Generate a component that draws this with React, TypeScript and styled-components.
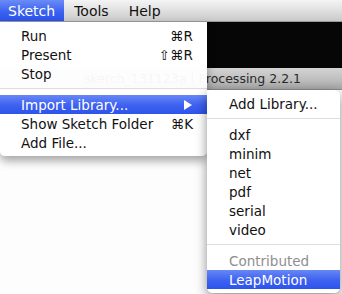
import React from "react";
import styled, { createGlobalStyle, css } from "styled-components";

const GlobalStyle = createGlobalStyle`
  html, body { margin: 0; padding: 0; background: #fff; }
  body { width: 342px; height: 294px; overflow: hidden; font-family: "DejaVu Sans", "Liberation Sans", sans-serif; }
`;

const Screen = styled.div`
  position: relative;
  width: 342px;
  height: 294px;
  overflow: hidden;
  background: #fff;
  display: flex;
  flex-direction: column;
`;

const MenuBar = styled.div`
  height: 21px;
  display: flex;
  align-items: stretch;
  background: linear-gradient(#f4f4f4, #e2e2e2 45%, #c9c9c9);
  border-bottom: 1px solid #9a9a9a;
`;

const BarTitle = styled.div<{ $active?: boolean }>`
  display: flex;
  align-items: center;
  padding: 0 10px;
  font-size: 14px;
  color: #111;
  ${(p) =>
    p.$active &&
    css`
      padding: 0 9px 0 8px;
      color: #fff;
      background: linear-gradient(#6a8cf6, #3c62f0 55%, #2b52ea);
    `}
`;

const Desktop = styled.div`
  flex: 1;
  display: flex;
  flex-direction: column;
`;

const UpperRow = styled.div`
  height: 46px;
  display: grid;
  grid-template-columns: 207px 1fr;
`;

const LightPane = styled.div`
  background: #fbfbfb;
`;

const DarkPane = styled.div`
  background: #060606;
`;

const WindowTitle = styled.div`
  height: 21px;
  display: flex;
  align-items: center;
  padding-left: 84px;
  font-size: 12.5px;
  color: #2a2a2a;
  white-space: nowrap;
  background: linear-gradient(#d4d4d4, #bcbcbc 60%, #a6a6a6);
  border-bottom: 1px solid #8c8c8c;
`;

const LowerArea = styled.div`
  flex: 1;
  background: #fdfdfd;
`;

const Menu = styled.div`
  position: absolute;
  left: 0;
  top: 22px;
  width: 207px;
  padding: 4px 0 4px;
  background: rgba(255, 255, 255, 0.96);
  border-radius: 0 0 5px 5px;
  box-shadow: 0 5px 10px rgba(0, 0, 0, 0.35);
  box-sizing: border-box;
`;

const SubMenu = styled.div`
  position: absolute;
  left: 207px;
  top: 90px;
  width: 133px;
  padding: 4px 0 4px;
  background: rgba(255, 255, 255, 0.98);
  border-radius: 0 6px 6px 6px;
  box-shadow: 0 4px 12px rgba(0, 0, 0, 0.45);
  box-sizing: border-box;
`;

const Item = styled.div<{ $selected?: boolean; $disabled?: boolean }>`
  height: 19px;
  display: flex;
  align-items: center;
  justify-content: space-between;
  padding: 0 14px 0 21px;
  font-size: 13.5px;
  color: ${(p) => (p.$disabled ? "#8e8e8e" : "#111")};
  white-space: nowrap;
  ${(p) =>
    p.$selected &&
    css`
      color: #fff;
      background: linear-gradient(#6787f6, #3d61f0 55%, #2d53ea);
    `}
`;

const SubItem = styled(Item)`
  padding: 0 10px 0 22px;
`;

const Shortcut = styled.span`
  font-size: 13.5px;
`;

const Arrow = styled.span`
  width: 0;
  height: 0;
  margin-right: 1px;
  border-top: 5px solid transparent;
  border-bottom: 5px solid transparent;
  border-left: 8px solid #fff;
`;

const Separator = styled.div`
  height: 1px;
  margin: 5px 0 6px;
  background: #dedede;
`;

export default function App() {
  return (
    <>
      <GlobalStyle />
      <Screen>
        <MenuBar>
          <BarTitle $active>Sketch</BarTitle>
          <BarTitle>Tools</BarTitle>
          <BarTitle>Help</BarTitle>
        </MenuBar>
        <Desktop>
          <UpperRow>
            <LightPane />
            <DarkPane />
          </UpperRow>
          <WindowTitle>sketch_131123a | Processing 2.2.1</WindowTitle>
          <LowerArea />
        </Desktop>

        <Menu>
          <Item>
            Run<Shortcut>⌘R</Shortcut>
          </Item>
          <Item>
            Present<Shortcut>⇧⌘R</Shortcut>
          </Item>
          <Item>Stop</Item>
          <Separator />
          <Item $selected>
            Import Library...
            <Arrow />
          </Item>
          <Item>
            Show Sketch Folder<Shortcut>⌘K</Shortcut>
          </Item>
          <Item>Add File...</Item>
        </Menu>

        <SubMenu>
          <SubItem>Add Library...</SubItem>
          <Separator />
          <SubItem>dxf</SubItem>
          <SubItem>minim</SubItem>
          <SubItem>net</SubItem>
          <SubItem>pdf</SubItem>
          <SubItem>serial</SubItem>
          <SubItem>video</SubItem>
          <Separator />
          <SubItem $disabled>Contributed</SubItem>
          <SubItem $selected>LeapMotion</SubItem>
        </SubMenu>
      </Screen>
    </>
  );
}
